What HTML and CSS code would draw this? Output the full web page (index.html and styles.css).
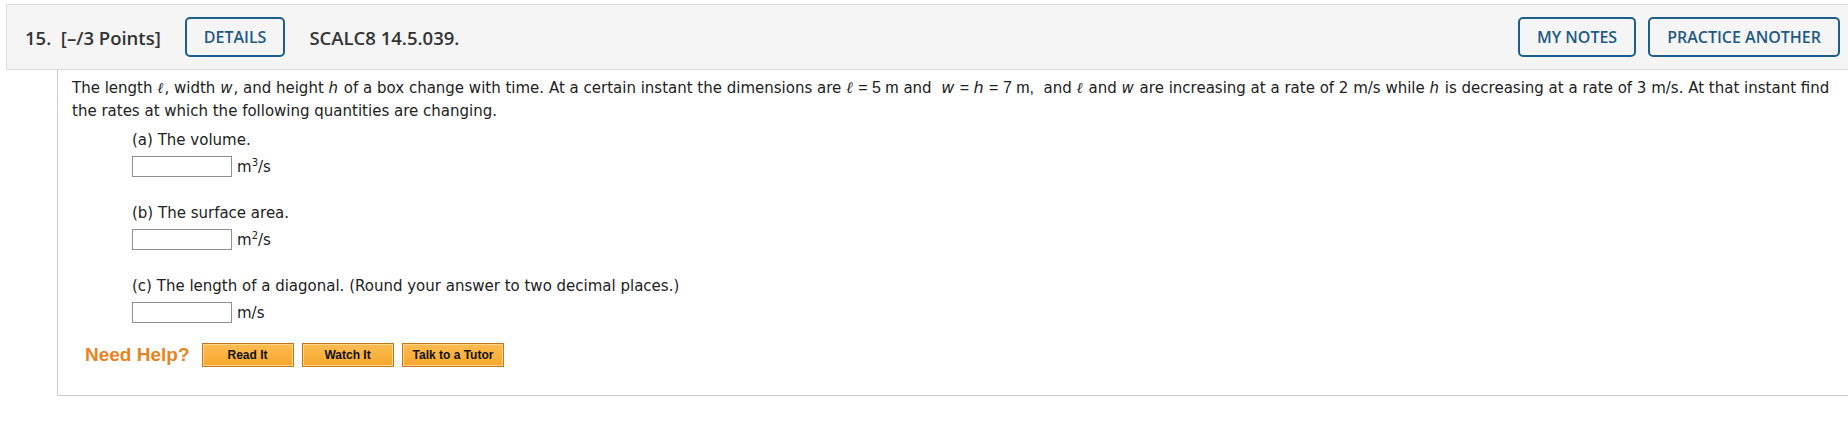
FILE: index.html
```html
<!DOCTYPE html>
<html>
<head>
<meta charset="utf-8">
<link rel="stylesheet" href="styles.css">
</head>
<body>
<div class="page">
  <div class="qhead">
    <div class="qhead-left">
      <span class="qnum">15.&nbsp; [–/3 Points]</span>
      <button class="hbtn">DETAILS</button>
      <span class="qcode">SCALC8 14.5.039.</span>
    </div>
    <div class="qhead-right">
      <button class="hbtn">MY NOTES</button>
      <button class="hbtn">PRACTICE ANOTHER</button>
    </div>
  </div>
  <div class="qbody">
    <p class="stem"><span>The length </span><span class="v ell">ℓ</span><span>, width </span><span class="v">w</span><span>, and height </span><span class="v">h</span><span> of a box change with time. At a certain instant the dimensions are </span><span class="m"><span class="v ell">ℓ</span> = 5 m</span><span> and &nbsp;</span><span class="m"><span class="v">w</span> = <span class="v">h</span> = 7 m,</span><span> &nbsp;and </span><span class="v ell">ℓ</span><span> and </span><span class="v">w</span><span> are increasing at a rate of 2 m/s while </span><span class="v">h</span><span> is decreasing at a rate of 3 m/s. At that instant find </span><span>the rates at which the following quantities are changing.</span></p>
    <div class="part">
      <div class="plabel">(a) The volume.</div>
      <div class="ans"><input class="box" type="text"><span class="unit">m<sup>3</sup>/s</span></div>
    </div>
    <div class="part">
      <div class="plabel">(b) The surface area.</div>
      <div class="ans"><input class="box" type="text"><span class="unit">m<sup>2</sup>/s</span></div>
    </div>
    <div class="part">
      <div class="plabel">(c) The length of a diagonal. (Round your answer to two decimal places.)</div>
      <div class="ans"><input class="box" type="text"><span class="unit">m/s</span></div>
    </div>
    <div class="help">
      <span class="need">Need Help?</span>
      <button class="obtn">Read It</button>
      <button class="obtn">Watch It</button>
      <button class="obtn">Talk to a Tutor</button>
    </div>
  </div>
</div>
</body>
</html>
```
FILE: styles.css
```css
html, body {
  margin: 0;
  padding: 0;
  background: #ffffff;
}
.page {
  padding: 4px 0 0 6px;
}
.qhead {
  display: flex;
  align-items: center;
  justify-content: space-between;
  height: 64px;
  border: 1px solid #dcdcdc;
  border-right: none;
  background: #f5f5f5;
  padding: 0 8px 0 18px;
  font-family: "Open Sans", "Noto Sans", sans-serif;
}
.qhead-left, .qhead-right {
  display: flex;
  align-items: center;
}
.qhead-left { gap: 24px; }
.qhead-right { gap: 12px; }
.qnum, .qcode {
  font-size: 18.5px;
  font-weight: 600;
  color: #333333;
}
.hbtn {
  height: 40px;
  padding: 0 17px;
  border: 2px solid #1d5f8c;
  border-radius: 5px;
  background: transparent;
  color: #1f5a87;
  font-family: "Open Sans", "Noto Sans", sans-serif;
  font-size: 16px;
  font-weight: 600;
}
.qbody {
  margin-left: 51px;
  border-left: 1px solid #cccccc;
  border-bottom: 1px solid #cccccc;
  padding: 6px 0 28px 14px;
  font-family: "DejaVu Sans", Verdana, sans-serif;
  font-size: 15px;
  color: #222222;
}
.stem {
  margin: 0;
  line-height: 23px;
  padding-right: 10px;
}
.v {
  font-family: "DejaVu Sans", sans-serif;
  font-style: italic;
  padding-right: 1px;
}
.ell {
  font-family: "DejaVu Serif", serif;
}
.m {
  font-family: "Liberation Sans", Arial, sans-serif;
  font-size: 16px;
}
.part {
  margin: 6px 0 0 60px;
}
.part + .part {
  margin-top: 25px;
}
.plabel {
  line-height: 22px;
}
.ans {
  display: flex;
  align-items: center;
  gap: 5px;
  margin-top: 5px;
}
.box {
  width: 100px;
  height: 21px;
  box-sizing: border-box;
  border: 1px solid #8f8f8f;
  margin: 0;
  padding: 0;
}
.unit {
  font-size: 15px;
}
.unit sup {
  font-size: 10px;
  vertical-align: 6px;
  line-height: 0;
}
.help {
  display: flex;
  align-items: center;
  margin: 20px 0 0 13px;
  height: 24px;
}
.need {
  font-family: "Liberation Sans", Arial, sans-serif;
  font-weight: bold;
  font-size: 19px;
  color: #e8831f;
  margin-right: 12px;
}
.obtn {
  min-width: 92px;
  height: 24px;
  padding: 0 10px;
  margin-right: 8px;
  border: 1px solid #c8761c;
  box-shadow: inset 0 0 0 1px #fdd48a;
  background: linear-gradient(#fcbc52, #f8a72e);
  font-family: "Liberation Sans", Arial, sans-serif;
  font-weight: bold;
  font-size: 12px;
  color: #111111;
}
```
